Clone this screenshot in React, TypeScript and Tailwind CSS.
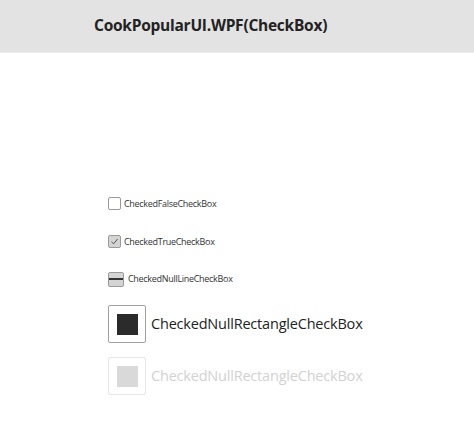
import React from "react";

const font = { fontFamily: '"Open Sans", "Noto Sans", sans-serif' };

export default function App() {
  return (
    <div className="w-[474px] h-[426px] bg-white overflow-hidden" style={font}>
      <div className="h-[53px] bg-[#e3e3e3] flex items-center pl-[94px] border-b border-[#ececec]">
        <span className="text-[15.5px] font-bold text-[#222] tracking-[-0.25px]">CookPopularUI.WPF(CheckBox)</span>
      </div>
      <div className="flex flex-col pl-[108px] pt-[144px]">
        <div className="flex items-center h-[13px]">
          <div className="w-[13px] h-[13px] border border-[#9a9a9a] rounded-[2px] bg-white" />
          <span className="ml-[3px] text-[9px] tracking-[-0.3px] text-[#333]">CheckedFalseCheckBox</span>
        </div>
        <div className="flex items-center h-[13px] mt-[25px]">
          <div className="w-[13px] h-[13px] border border-[#9a9a9a] rounded-[2px] bg-[#d4d4d4] flex items-center justify-center">
            <svg width="9" height="9" viewBox="0 0 9 9">
              <path d="M1.5 4.8 L3.6 6.8 L7.6 2" fill="none" stroke="#555" strokeWidth="1" />
            </svg>
          </div>
          <span className="ml-[3px] text-[9px] tracking-[-0.3px] text-[#333]">CheckedTrueCheckBox</span>
        </div>
        <div className="flex items-center h-[16px] mt-[23px]">
          <div className="w-[16px] h-[15px] border border-[#9a9a9a] rounded-[2px] bg-[#d4d4d4] flex items-center justify-center">
            <div className="w-[14px] h-[2px] bg-[#333]" />
          </div>
          <span className="ml-[4px] text-[9px] tracking-[-0.3px] text-[#333]">CheckedNullLineCheckBox</span>
        </div>
        <div className="flex items-center h-[38px] mt-[18px]">
          <div className="w-[38px] h-[38px] border border-[#a0a0a0] rounded-[2px] bg-white flex items-center justify-center">
            <div className="w-[21px] h-[21px] bg-[#2b2b2b]" />
          </div>
          <span className="ml-[5px] text-[14.5px] tracking-[-0.2px] text-[#222]">CheckedNullRectangleCheckBox</span>
        </div>
        <div className="flex items-center h-[38px] mt-[14px]">
          <div className="w-[38px] h-[38px] border border-[#e6e6e6] rounded-[2px] bg-white flex items-center justify-center">
            <div className="w-[21px] h-[21px] bg-[#d9d9d9]" />
          </div>
          <span className="ml-[5px] text-[14.5px] tracking-[-0.2px] text-[#d2d2d2]">CheckedNullRectangleCheckBox</span>
        </div>
      </div>
    </div>
  );
}
